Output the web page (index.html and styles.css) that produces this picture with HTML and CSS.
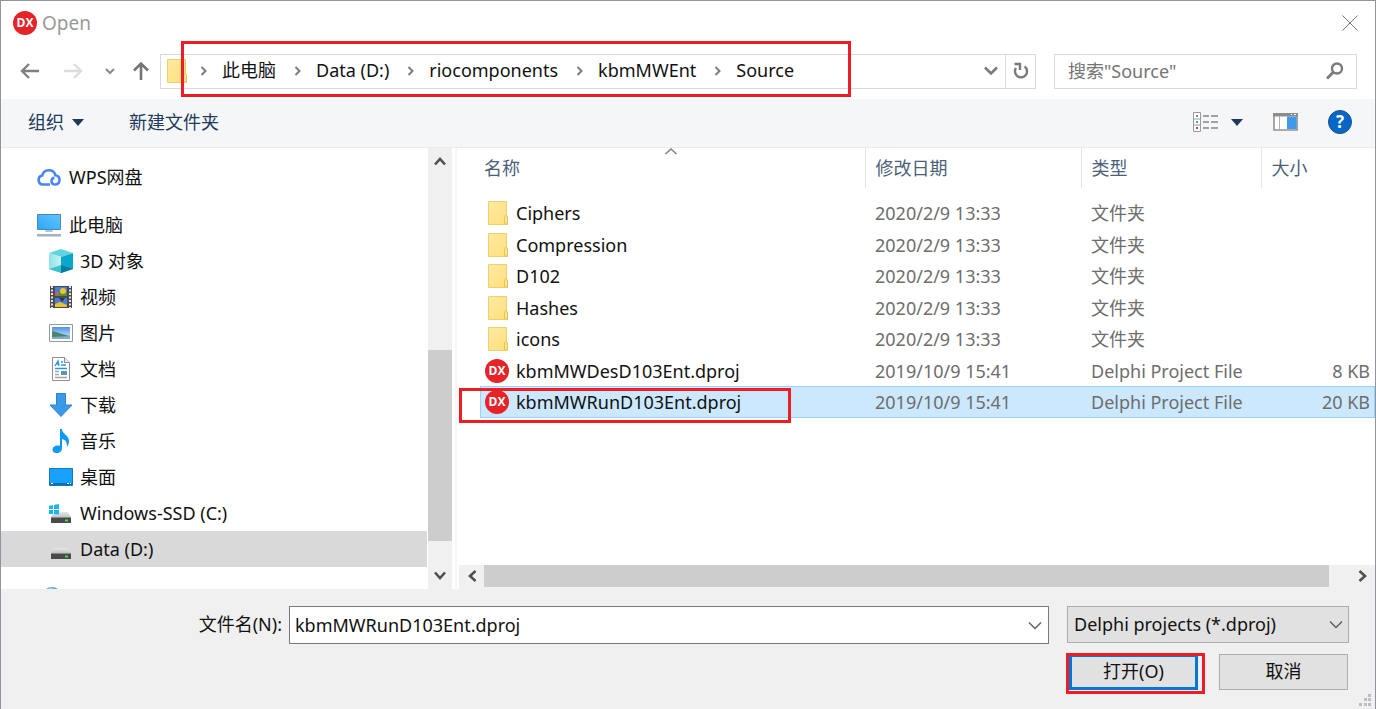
FILE: index.html
```html
<!DOCTYPE html>
<html lang="zh-CN">
<head>
<meta charset="utf-8">
<title>Open</title>
<link rel="stylesheet" href="styles.css">
</head>
<body>
<svg class="defs" aria-hidden="true">
  <defs>
    <linearGradient id="g-folder" x1="0" y1="0" x2="1" y2="1"><stop offset="0" stop-color="#ffeaa3"/><stop offset="1" stop-color="#ffdf7c"/></linearGradient>
    <linearGradient id="g-screen" x1="0" y1="1" x2="1" y2="0"><stop offset="0" stop-color="#2ea6f8"/><stop offset="1" stop-color="#63c4ff"/></linearGradient>
    <linearGradient id="g-sky" x1="0" y1="0" x2="0" y2="1"><stop offset="0" stop-color="#4c94e6"/><stop offset="1" stop-color="#d9eefb"/></linearGradient>
    <linearGradient id="g-cube" x1="0" y1="0" x2="1" y2="0"><stop offset="0" stop-color="#8fe3e8"/><stop offset="1" stop-color="#c9f1f1"/></linearGradient>
    <linearGradient id="g-drive" x1="0" y1="0" x2="0" y2="1"><stop offset="0" stop-color="#e6e7e9"/><stop offset="1" stop-color="#c3c5c8"/></linearGradient>
    <symbol id="dx" viewBox="0 0 24 24"><circle cx="12" cy="12" r="12" fill="#e62329"/><text x="12" y="16" text-anchor="middle" class="dx-text">DX</text></symbol>
    <symbol id="folder" viewBox="0 0 20 24"><path d="M.5.5h18v16l1 1v6H.5z" fill="url(#g-folder)" stroke="#efd069"/><path d="M16.500 23v-7l1.500-2 1.500 2v7z" fill="#ffe590" stroke="#e9c44f"/></symbol>
    <symbol id="chev" viewBox="0 0 8 10"><path d="M1.500 1l4 4-4 4" fill="none" stroke="#7d7d7d" stroke-width="2"/></symbol>
    <symbol id="drive" viewBox="0 0 20 11"><path d="M3.500 0h13L20 5H0z" fill="url(#g-drive)"/><path d="M0 5h20v6H0z" fill="#4a4a4a"/><path d="M0 5h20v1H0z" fill="#8a8a8a"/><path d="M14 7.500h3v2h-3z" fill="#3fe03f"/></symbol>
  </defs>
</svg>
<div class="dialog">
  <header class="titlebar">
    <svg class="i24"><use href="#dx"/></svg>
    <h1 class="title">Open</h1>
    <button class="plain close" aria-label="关闭"><svg width="16" height="16" viewBox="0 0 16 16"><path d="M.5.5l15 15M15.500.5l-15 15" stroke="#777" fill="none"/></svg></button>
  </header>

  <nav class="navbar" aria-label="导航">
    <div class="history">
      <button class="plain" aria-label="后退"><svg width="20" height="18" viewBox="0 0 20 18"><path d="M19 9H3M9 2L2 9l7 7" fill="none" stroke="#808080" stroke-width="2.400"/></svg></button>
      <button class="plain" aria-label="前进"><svg width="20" height="18" viewBox="0 0 20 18"><path d="M1 9h16M11 2l7 7-7 7" fill="none" stroke="#dcdcdc" stroke-width="2.400"/></svg></button>
      <button class="plain" aria-label="最近位置"><svg width="10" height="8" viewBox="0 0 10 8"><path d="M1 2l4 4 4-4" fill="none" stroke="#8a8a8a" stroke-width="2"/></svg></button>
      <button class="plain" aria-label="上移"><svg width="18" height="20" viewBox="0 0 18 20"><path d="M9 19V3M2 9.500L9 2.500l7 7" fill="none" stroke="#757575" stroke-width="2.600"/></svg></button>
    </div>
    <div class="address">
      <svg class="folder"><use href="#folder"/></svg>
      <ol class="crumbs">
        <li><svg class="chev"><use href="#chev"/></svg><a href="#">此电脑</a></li>
        <li><svg class="chev"><use href="#chev"/></svg><a href="#">Data (D:)</a></li>
        <li><svg class="chev"><use href="#chev"/></svg><a href="#">riocomponents</a></li>
        <li><svg class="chev"><use href="#chev"/></svg><a href="#">kbmMWEnt</a></li>
        <li><svg class="chev"><use href="#chev"/></svg><a href="#">Source</a></li>
      </ol>
      <button class="plain drop" aria-label="以前的位置"><svg width="16" height="10" viewBox="0 0 16 10"><path d="M2 1.500l6 6 6-6" fill="none" stroke="#7a7a7a" stroke-width="2.600"/></svg></button>
      <button class="plain refresh" aria-label="刷新"><svg width="16" height="18" viewBox="0 0 16 18"><path d="M11.500 4.500A6 6 0 1 1 3 6" fill="none" stroke="#7a7a7a" stroke-width="2.400"/><path d="M1.500 2H7v6" fill="none" stroke="#7a7a7a" stroke-width="2.400"/></svg></button>
      <span class="mark mark-address"></span>
    </div>
    <div class="search">
      <input type="search" placeholder='搜索"Source"' aria-label="搜索">
      <svg width="18" height="18" viewBox="0 0 18 18"><circle cx="11" cy="6.500" r="5" fill="none" stroke="#7a7a7a" stroke-width="2.400"/><path d="M7.500 10L1 16.500" stroke="#7a7a7a" stroke-width="2.800"/></svg>
    </div>
  </nav>

  <div class="toolbar">
    <button class="plain">组织<svg width="12" height="7" viewBox="0 0 12 7"><path d="M0 0h12L6 7z" fill="#1e395b"/></svg></button>
    <button class="plain">新建文件夹</button>
    <div class="views">
      <button class="plain view" aria-label="更改视图">
        <svg width="25" height="20" viewBox="0 0 25 20"><path d="M.5.5h7v19h-7zM.5 7h7M.5 13h7" fill="#fff" stroke="#9a9a9a"/><path d="M3 3h2v2H3z" fill="#888"/><path d="M3 9h2v2H3z" fill="#4aa3ef"/><path d="M3 15h2v2H3z" fill="#e04040"/><path d="M10 4h6m2 0h7M10 10h6m2 0h7M10 16h6m2 0h7" stroke="#858585" stroke-width="1.400"/></svg>
        <svg width="12" height="7" viewBox="0 0 12 7"><path d="M0 0h12L6 7z" fill="#1e395b"/></svg>
      </button>
      <button class="plain" aria-label="预览窗格"><svg width="25" height="18" viewBox="0 0 25 18"><path d="M1 1h23v16H1z" fill="#fff" stroke="#919191" stroke-width="1.600"/><path d="M0 0h25v3.500H0z" fill="#8c8c8c"/><path d="M6.500 3v13" stroke="#b0b0b0"/><path d="M14 3.500h9.500V16H14z" fill="#3f9be8"/><path d="M18 1h1v1h-1zM21 1h2v1h-2z" fill="#fff"/></svg></button>
      <button class="plain" aria-label="帮助"><svg width="24" height="24" viewBox="0 0 24 24"><circle cx="12" cy="12" r="11.500" fill="#0767c6" stroke="#1b4f8a"/><text x="12" y="18" text-anchor="middle" class="help-text">?</text></svg></button>
    </div>
  </div>

  <main class="panes">
    <ul class="tree">
      <li class="top wps"><svg width="24" height="20" viewBox="0 0 24 20"><path d="M13 17.500H6a4.500 4.500 0 0 1-.8-8.900A6.800 6.800 0 0 1 18.400 8.200 4.700 4.700 0 0 1 18.500 17.500c-3 0-4-2-4-3.600a3 3 0 0 1 3-3" fill="none" stroke="#4686f3" stroke-width="2.600"/></svg>WPS网盘</li>
      <li class="top"><svg width="24" height="23" viewBox="0 0 24 23"><path d="M.5.5h23v15H.5z" fill="url(#g-screen)" stroke="#4b88b4"/><path d="M9 16h6l1 2H8z" fill="#b5c2cc"/><path d="M0 20h24v2.500H0z" fill="#a5b1bd"/></svg>此电脑</li>
      <li><svg width="24" height="24" viewBox="0 0 24 24"><path d="M0 4l12-4 12 4-12 4z" fill="#60d3de"/><path d="M0 4l12 4v16L0 20z" fill="url(#g-cube)"/><path d="M12 8l12-4v16l-12 4z" fill="#09a7cb"/><path d="M0 20l12-4v8z" fill="#3cc1d2"/><path d="M12 16l12 4-12 4z" fill="#067e9d"/></svg>3D 对象</li>
      <li><svg width="24" height="24" viewBox="0 0 24 24"><path d="M1 1h22v22H1z" fill="#4b4b4b"/><path d="M3 1v22M21 1v22" stroke="#e4e4e4" stroke-width="2" stroke-dasharray="2 1.500"/><path d="M6 2h12v9H6zM6 13h12v9H6z" fill="#477de0"/><path d="M6 8l5-2 7 2v3H6z" fill="#45973c"/><path d="M6 7h4v3H6z" fill="#e05468"/><circle cx="14" cy="6" r="3" fill="#f0c52e"/><path d="M6 19l5-2 7 3v2H6z" fill="#e5c22f"/><path d="M10 13h6l-3 4z" fill="#39323a"/></svg>视频</li>
      <li><svg width="24" height="18" viewBox="0 0 24 18"><path d="M.5.500h23v17H.500z" fill="#fff" stroke="#989898"/><path d="M3 3h18v12H3z" fill="url(#g-sky)"/><path d="M3 7c5 1 9 3 18 5v1H3z" fill="#4d8273"/><path d="M3 13l18-1v3H3z" fill="#7fb0c4"/></svg>图片</li>
      <li><svg width="24" height="24" viewBox="0 0 24 24"><path d="M3.500.5h12l5 5v18h-17z" fill="#fff" stroke="#8d8d8d"/><path d="M15.500.5v5h5" fill="#eee" stroke="#8d8d8d"/><path d="M6 9l3-5 1 5M7 7h3M12 5h2M12 8h5M6 11.500h12" fill="none" stroke="#2f97df" stroke-width="1.400"/><path d="M6 14.500h4M6 17.500h4M6 20.500h12" stroke="#a5a5a5" stroke-width="1.400"/><path d="M12 14h6v4h-6z" fill="#5b96ab"/></svg>文档</li>
      <li><svg width="24" height="24" viewBox="0 0 24 24"><path d="M7.500.5h9V12H23L12 23.500 1 12h6.500z" fill="#3b99e9" stroke="#2f83cc"/></svg>下载</li>
      <li><svg width="24" height="24" viewBox="0 0 24 24"><path d="M11 0h2c0 5 7 6 7 12 0 3-1 4-2 6 0-5-1-7-5-8v9c0 3-2 5-5.500 5-2.500 0-4-1.300-4-3.300 0-2.600 2.500-4.700 7.500-4z" fill="#0d9af5"/></svg>音乐</li>
      <li><svg width="24" height="18" viewBox="0 0 24 18"><path d="M.5.5h23v17H.500z" fill="#18a2ff" stroke="#1876bd"/><path d="M1 15h22v2H1z" fill="#116fac"/><path d="M2 15.500h2M18 15.500h2M21 15.500h1" stroke="#fff"/></svg>桌面</li>
      <li><svg width="24" height="24" viewBox="0 0 24 24"><use href="#drive" x="2" y="11" width="20" height="11"/><path d="M0 5l4-1v4H0zM5 4l5-1v5H5zM0 9h4v4H0zM5 9h5v4.500L5 13z" fill="#14b7ef"/></svg>Windows-SSD (C:)</li>
      <li class="selected"><svg width="24" height="24" viewBox="0 0 24 24"><use href="#drive" x="2" y="11" width="20" height="11"/></svg>Data (D:)</li>
      <li class="net"><svg width="24" height="24" viewBox="0 0 24 24"><circle cx="7" cy="12" r="10" fill="#61a8c7"/><path d="M3 4l4-1 2 3-4 2z" fill="#b6e0ee"/></svg></li>
    </ul>
    <div class="vbar">
      <button class="plain" aria-label="向上滚动"><svg width="12" height="10" viewBox="0 0 12 10"><path d="M1 8.500l5-5.500 5 5.500" fill="none" stroke="#505050" stroke-width="2.600"/></svg></button>
      <div class="vtrack"><div class="vthumb"></div></div>
      <button class="plain" aria-label="向下滚动"><svg width="12" height="10" viewBox="0 0 12 10"><path d="M1 1.500L6 7l5-5.500" fill="none" stroke="#505050" stroke-width="2.600"/></svg></button>
    </div>
    <section class="files">
      <div class="list">
        <svg class="sort" width="12" height="7" viewBox="0 0 12 7"><path d="M.5 6L6 1l5.500 5" fill="none" stroke="#808080" stroke-width="1.500"/></svg>
        <table>
          <colgroup><col class="c-name"><col class="c-date"><col class="c-type"><col></colgroup>
          <thead><tr><th>名称</th><th>修改日期</th><th>类型</th><th>大小</th></tr></thead>
          <tbody>
            <tr><td><span class="name"><svg class="folder"><use href="#folder"/></svg>Ciphers</span></td><td>2020/2/9 13:33</td><td>文件夹</td><td></td></tr>
            <tr><td><span class="name"><svg class="folder"><use href="#folder"/></svg>Compression</span></td><td>2020/2/9 13:33</td><td>文件夹</td><td></td></tr>
            <tr><td><span class="name"><svg class="folder"><use href="#folder"/></svg>D102</span></td><td>2020/2/9 13:33</td><td>文件夹</td><td></td></tr>
            <tr><td><span class="name"><svg class="folder"><use href="#folder"/></svg>Hashes</span></td><td>2020/2/9 13:33</td><td>文件夹</td><td></td></tr>
            <tr><td><span class="name"><svg class="folder"><use href="#folder"/></svg>icons</span></td><td>2020/2/9 13:33</td><td>文件夹</td><td></td></tr>
            <tr><td><span class="name"><svg class="i24"><use href="#dx"/></svg>kbmMWDesD103Ent.dproj</span></td><td>2019/10/9 15:41</td><td>Delphi Project File</td><td>8 KB</td></tr>
            <tr class="selected"><td><span class="name"><svg class="i24"><use href="#dx"/></svg>kbmMWRunD103Ent.dproj<span class="mark mark-file"></span></span></td><td>2019/10/9 15:41</td><td>Delphi Project File</td><td>20 KB</td></tr>
          </tbody>
        </table>
      </div>
      <div class="hbar">
        <button class="plain" aria-label="向左滚动"><svg width="10" height="12" viewBox="0 0 10 12"><path d="M8.500 1L3 6l5.500 5" fill="none" stroke="#505050" stroke-width="2.600"/></svg></button>
        <div class="hthumb"></div>
        <button class="plain" aria-label="向右滚动"><svg width="10" height="12" viewBox="0 0 10 12"><path d="M1.500 1L7 6l-5.500 5" fill="none" stroke="#505050" stroke-width="2.600"/></svg></button>
      </div>
    </section>
  </main>

  <footer class="footer">
    <label for="fname">文件名(N):</label>
    <div class="combo">
      <input id="fname" type="text" value="kbmMWRunD103Ent.dproj">
      <button class="plain" aria-label="文件名列表"><svg width="14" height="9" viewBox="0 0 14 9"><path d="M1 1.500l6 6 6-6" fill="none" stroke="#606060" stroke-width="1.500"/></svg></button>
    </div>
    <div class="filter">
      <select aria-label="文件类型"><option>Delphi projects (*.dproj)</option></select>
      <svg width="14" height="9" viewBox="0 0 14 9"><path d="M1 1.500l6 6 6-6" fill="none" stroke="#606060" stroke-width="1.500"/></svg>
    </div>
    <div class="actions">
      <div class="open"><button class="btn primary">打开(O)</button><span class="mark mark-open"></span></div>
      <button class="btn">取消</button>
    </div>
    <svg class="grip" width="12" height="12" viewBox="0 0 12 12"><path d="M9 0h3v3H9zM9 4h3v3H9zM5 4h3v3H5zM9 9h3v3H9zM5 9h3v3H5zM0 9h3v3H0z" fill="#bfbfbf"/></svg>
  </footer>
</div>
</body>
</html>
```

FILE: styles.css
```css
* { box-sizing: border-box; }
body {
  margin: 0;
  background: #fff;
  color: #111;
  font: 18px/24px "Noto Sans", "Noto Sans CJK SC", sans-serif;
}
button, input, select { font: inherit; color: inherit; margin: 0; }
svg { display: block; flex: none; }
a { color: inherit; text-decoration: none; }
ul, ol { list-style: none; margin: 0; padding: 0; }
.defs { position: absolute; width: 0; height: 0; }
.dx-text { font: bold 12px "Open Sans", sans-serif; fill: #fff; }
.help-text { font: bold 17px "Open Sans", sans-serif; fill: #fff; }
.i24 { width: 24px; height: 24px; }
.folder { width: 20px; height: 24px; }
.plain {
  display: flex;
  align-items: center;
  justify-content: center;
  border: 0;
  padding: 0;
  background: none;
}
.mark { position: absolute; border: 3px solid #ee1c25; pointer-events: none; }

.dialog {
  display: flex;
  flex-direction: column;
  height: 100vh;
  border: 1px solid #8f949e;
  border-bottom: 0;
}

.titlebar { display: flex; align-items: center; gap: 5px; height: 44px; padding: 0 17px 0 12px; }
.title { flex: 1; margin: 0; font-size: 19px; font-weight: 400; color: #999; }

.navbar { display: flex; align-items: center; height: 54px; padding: 0 18px 2px 19px; }
.history { display: flex; align-items: center; justify-content: space-between; width: 130px; margin-right: 10px; }
.history .plain:nth-child(3) { margin-right: -6px; }
.address {
  position: relative;
  display: flex;
  flex: 1;
  align-items: center;
  height: 35px;
  margin-right: 18px;
  padding-left: 6px;
  border: 1px solid #d9d9d9;
}
.crumbs { display: flex; flex: 1; margin-left: 13px; gap: 18px; }
.crumbs li { display: flex; align-items: center; gap: 14px; }
.crumbs a { padding-bottom: 2px; }
.chev { width: 8px; height: 10px; }
.drop { width: 29px; height: 33px; }
.refresh { width: 30px; height: 33px; border-left: 1px solid #d9d9d9; }
.mark-address { top: -14px; left: 20px; right: 184px; height: 56px; }
.search {
  display: flex;
  align-items: center;
  width: 303px;
  height: 35px;
  padding: 0 12px 0 13px;
  border: 1px solid #d9d9d9;
}
.search input { flex: 1; min-width: 0; border: 0; padding: 0; outline: 0; background: none; }
.search input::placeholder { color: #757575; opacity: 1; }

.toolbar {
  display: flex;
  align-items: center;
  gap: 45px;
  height: 49px;
  padding: 0 23px 2px 27px;
  border-bottom: 1px solid #e9ebed;
  background: #f4f6f8;
  color: #1e395b;
}
.toolbar .plain { gap: 8px; }
.views { display: flex; align-items: center; gap: 30px; margin-left: auto; }
.toolbar .view { gap: 13px; }

.panes { display: flex; flex: 1; min-height: 0; }
.tree { width: 426px; padding-top: 11px; overflow: hidden; }
.tree li { display: flex; align-items: center; gap: 7px; height: 36px; padding-left: 48px; }
.tree .top { padding-left: 36px; gap: 8px; }
.tree .wps { margin-bottom: 12px; }
.tree .selected { background: #d9d9d9; }
.tree .net { height: 42px; padding-left: 44px; align-items: flex-end; }
.vbar { display: flex; flex-direction: column; width: 24px; margin-left: 1px; background: #f0f0f0; }
.vbar .plain { height: 26px; }
.vtrack { display: flex; flex: 1; flex-direction: column; justify-content: flex-end; padding-bottom: 22px; }
.vthumb { height: 52%; background: #cdcdcd; }

.files { display: flex; flex: 1; flex-direction: column; min-width: 0; margin-left: 3px; border-left: 2px solid #f7f7f7; }
.list { position: relative; flex: 1; padding-left: 23px; }
.sort { position: absolute; top: 0; left: 208px; }
table { width: 100%; table-layout: fixed; border-collapse: collapse; }
.c-name { width: 385px; }
.c-date { width: 216px; }
.c-type { width: 180px; }
th, td { padding: 0 0 0 10px; text-align: left; font-weight: 400; white-space: nowrap; }
th { height: 40px; border-right: 1px solid #e5e5e5; color: #4c607a; }
th:first-child { padding-left: 4px; }
th:last-child { border-right: 0; }
thead::after { content: ""; display: block; height: 9px; }
tbody tr { height: 32px; }
tbody tr:nth-child(even) { height: 31px; }
td { color: #6d6d6d; }
td:first-child { padding-left: 5px; color: #111; }
td:last-child { padding-right: 5px; text-align: right; }
.name { position: relative; display: flex; align-items: center; gap: 7px; height: 24px; }
.name .folder { margin: 0 1px 0 3px; }
tr.selected { background: #cce8ff; outline: 1px solid #99d1ff; outline-offset: -1px; }
.mark-file { top: -2px; left: -26px; width: 332px; height: 35px; }
.hbar { display: flex; height: 24px; margin-left: 2px; background: #f0f0f0; border-bottom: 2px solid #f0f0f0; }
.hbar .plain { width: 25px; }
.hthumb { flex: 1; margin-right: 21px; background: #cdcdcd; }

.footer {
  position: relative;
  display: grid;
  grid-template-columns: 281px 1fr 282px;
  row-gap: 10px;
  padding: 17px 26px 19px 0;
  background: #f0f0f0;
}
.footer label { align-self: center; justify-self: end; padding-bottom: 2px; }
.combo { display: flex; height: 38px; margin: 0 18px 0 7px; border: 1px solid #7a7a7a; background: #fff; }
.combo input { flex: 1; min-width: 0; border: 0; padding: 0 5px; outline: 0; background: none; }
.combo .plain { width: 26px; }
.filter { position: relative; height: 38px; }
.filter select {
  width: 100%;
  height: 37px;
  padding: 0 32px 2px 6px;
  border: 1px solid #adadad;
  border-radius: 0;
  background: #e1e1e1;
  appearance: none;
}
.filter svg { position: absolute; top: 14px; right: 6px; pointer-events: none; }
.actions { display: flex; grid-column: 3; justify-content: space-between; padding: 0 1px 0 2px; }
.open { position: relative; }
.btn { width: 129px; height: 36px; padding: 0 0 2px; border: 1px solid #adadad; background: #e1e1e1; }
.btn.primary { border: 3px solid #0078d7; }
.mark-open { top: -1px; left: -3px; width: 139px; height: 41px; }
.grip { position: absolute; right: 4px; bottom: 3px; }
```
